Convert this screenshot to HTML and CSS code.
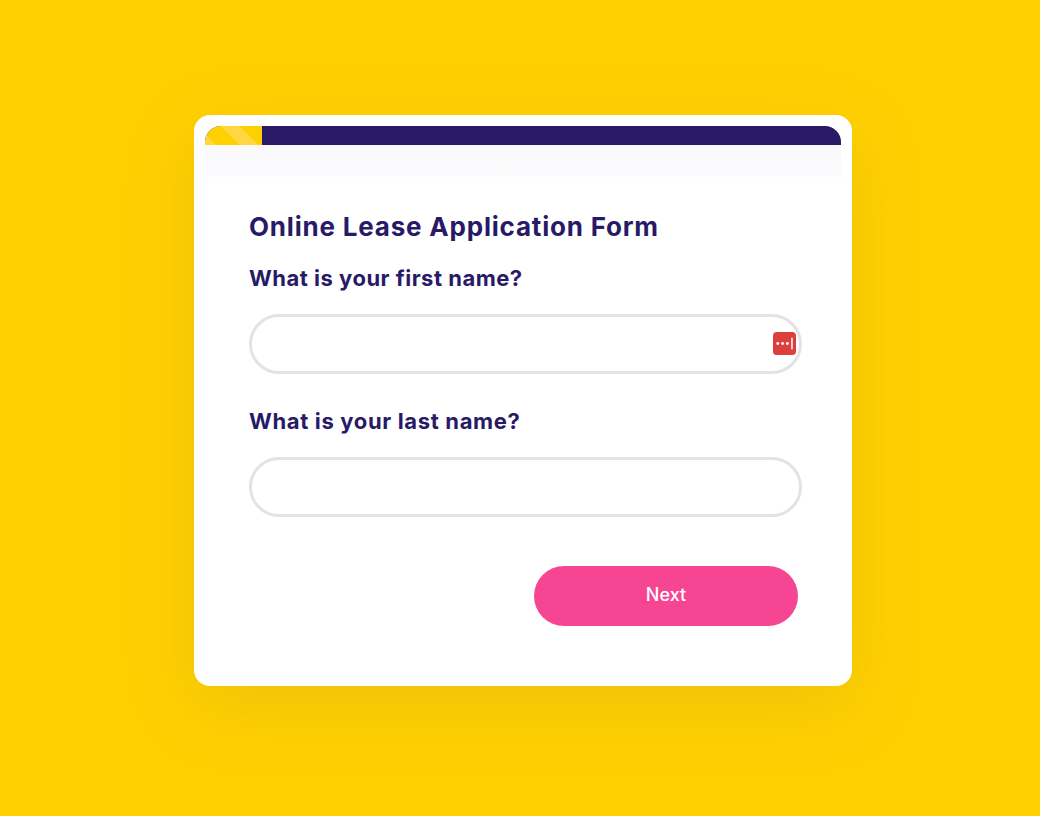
FILE: index.html
```html
<!DOCTYPE html>
<html lang="en">
<head>
  <meta charset="UTF-8" />
  <meta name="viewport" content="width=device-width, initial-scale=1.0">
  <title>Online Lease Application Form</title>
  <link rel="stylesheet" href="styles.css">
</head>
<body>
  <div class="card">
    <div class="progress">
      <div class="progress-fill"></div>
    </div>
    <div class="progress-glow"></div>

    <form class="form">
      <h1 class="form-title">Online Lease Application Form</h1>

      <label class="field-label" for="firstName">What is your first name?</label>
      <div class="input-wrap">
        <input class="text-input" id="firstName" type="text" />
        <svg class="pass-icon" viewBox="0 0 24 24" width="23" height="23" aria-hidden="true">
          <rect width="24" height="24" rx="4" fill="#dd3e3e" />
          <circle cx="5" cy="12" r="1.5" fill="#fff" />
          <circle cx="10" cy="12" r="1.5" fill="#fff" />
          <circle cx="15" cy="12" r="1.5" fill="#fff" />
          <rect x="19" y="6" width="1.6" height="12" fill="#fff" />
        </svg>
      </div>

      <label class="field-label second" for="lastName">What is your last name?</label>
      <div class="input-wrap">
        <input class="text-input" id="lastName" type="text" />
      </div>

      <div class="actions">
        <button class="next-btn" type="button">Next</button>
      </div>
    </form>
  </div>
</body>
</html>
```

FILE: styles.css
```css
* { margin: 0; padding: 0; box-sizing: border-box; }

body {
  font-family: 'Inter', 'Open Sans', sans-serif;
  background: #ffd000;
  min-height: 100vh;
  padding: 115px 0 0 194px;
  overflow: hidden;
}

.card {
  width: 658px;
  height: 571px;
  background: #fff;
  border-radius: 16px;
  padding: 11px;
  box-shadow: 0 20px 70px rgba(170, 140, 50, 0.2);
}

.progress {
  height: 19px;
  background: #281a66;
  border-radius: 16px 16px 0 0;
  overflow: hidden;
}

.progress-fill {
  width: 57px;
  height: 100%;
  background: linear-gradient(45deg,
    #ffd83f 0, #ffd83f 8.3px,
    #ffd000 8.3px, #ffd000 24.7px,
    #ffd83f 24.7px, #ffd83f 37.5px,
    #ffd000 37.5px);
}

.progress-glow {
  height: 42px;
  background: linear-gradient(#f9f9fc, #fbfbfd 55%, #fff);
}

.form {
  padding: 23px 39px 0 44px;
}

.form-title {
  font-size: 26px;
  line-height: 34px;
  font-weight: 700;
  letter-spacing: 0.8px;
  color: #281a66;
  margin-bottom: 19px;
}

.field-label {
  display: block;
  font-size: 22px;
  line-height: 30px;
  font-weight: 700;
  letter-spacing: 0.5px;
  color: #281a66;
  margin-bottom: 21px;
}

.field-label.second {
  margin-top: 32px;
  letter-spacing: 0.65px;
}

.input-wrap {
  position: relative;
}

.text-input {
  display: block;
  width: 100%;
  height: 60px;
  border: 3px solid #e3e3e6;
  border-radius: 30px;
  background: #fff;
  outline: none;
}

.pass-icon {
  position: absolute;
  top: 18px;
  right: 6px;
}

.actions {
  display: flex;
  justify-content: flex-end;
  margin-top: 49px;
  padding-right: 4px;
}

.next-btn {
  width: 264px;
  height: 60px;
  padding-bottom: 3px;
  border: none;
  border-radius: 30px;
  background: #f64593;
  color: #fff;
  font-family: inherit;
  font-size: 18px;
  font-weight: 450;
}
```
